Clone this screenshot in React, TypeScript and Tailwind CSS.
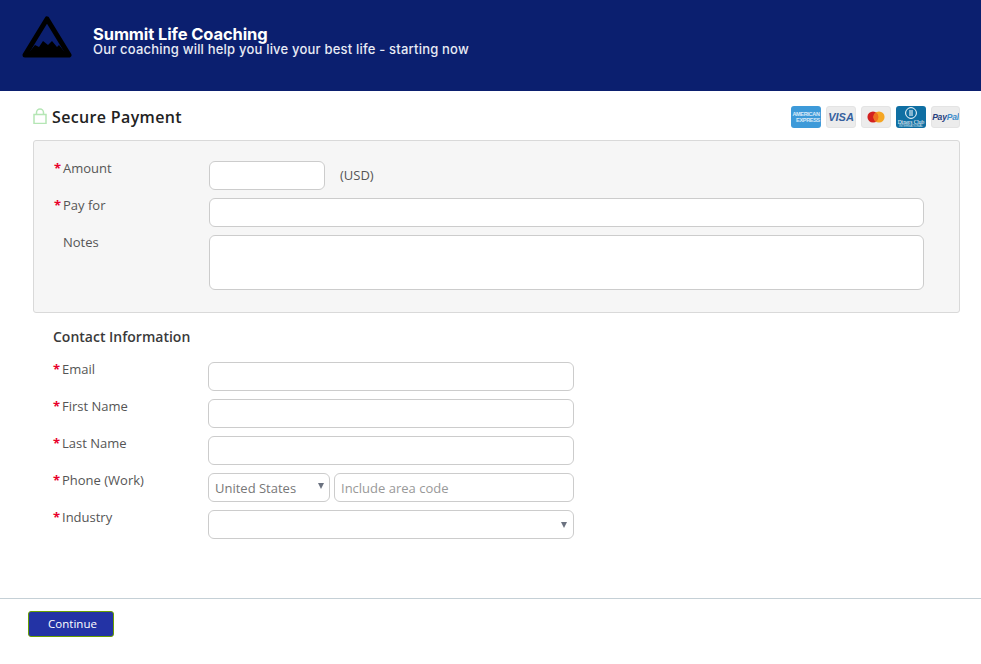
function Req() {
  return <span className="w-[9px] shrink-0 text-[#e8002a] text-[13px] leading-[19px] font-bold">*</span>;
}

function Label({ text, required = true, className = "" }: { text: string; required?: boolean; className?: string }) {
  return (
    <div className={"flex items-start text-[13px] leading-[19px] text-[#555] " + className}>
      {required ? <Req /> : <span className="w-[9px] shrink-0" />}
      <span>{text}</span>
    </div>
  );
}

function Field({ className = "" }: { className?: string }) {
  return <div className={"h-[29px] bg-white border border-[#ccc] rounded-[6px] " + className} />;
}

function Caret() {
  return <span className="w-0 h-0 border-l-[3.5px] border-r-[3.5px] border-t-[6px] border-l-transparent border-r-transparent border-t-[#6b7280]" />;
}

function CardBox({ children, className = "bg-[#ececec]" }: { children: React.ReactNode; className?: string }) {
  return <div className={"h-[22px] rounded-[3px] flex flex-col items-center justify-center overflow-hidden " + className}>{children}</div>;
}

function Cards() {
  return (
    <div className="flex gap-[5px]">
      <CardBox className="w-[30px] bg-[#3d9ad9]">
        <span className="text-[5.5px] leading-[6px] text-white/80 font-bold tracking-[-0.3px] font-['Liberation_Sans',sans-serif]">AMERICAN</span>
        <span className="text-[5.5px] leading-[6px] text-white/80 font-bold tracking-[-0.3px] pl-1 font-['Liberation_Sans',sans-serif]">EXPRESS</span>
      </CardBox>
      <CardBox className="w-[30px] bg-[#ececec] border border-[#e4e4e4]">
        <span className="text-[11px] italic font-bold text-[#35609e] font-['Liberation_Sans',sans-serif] leading-[11px]">VISA</span>
      </CardBox>
      <CardBox className="w-[30px] bg-[#ececec] border border-[#e4e4e4]">
        <svg width="20" height="12" viewBox="0 0 22 14">
          <circle cx="7.5" cy="7" r="6.5" fill="#d3201f" />
          <circle cx="14.5" cy="7" r="6.5" fill="#f5a623" />
          <path d="M11 1.6a6.5 6.5 0 0 1 0 10.8a6.5 6.5 0 0 1 0-10.8z" fill="#ee6f1f" />
        </svg>
      </CardBox>
      <CardBox className="w-[30px] bg-[#0f6fa3]">
        <svg width="12" height="12" viewBox="0 0 12 12">
          <circle cx="6" cy="6" r="5.4" fill="none" stroke="#fff" strokeWidth="1" />
          <path d="M5 3v6M7 3v6" stroke="#fff" strokeWidth="1" />
        </svg>
        <span className="text-[5.5px] leading-[6px] text-white font-['Liberation_Serif',serif] whitespace-nowrap">Diners Club</span>
        <span className="text-[3px] leading-[3px] text-white/80 font-['Liberation_Sans',sans-serif] whitespace-nowrap">INTERNATIONAL</span>
      </CardBox>
      <CardBox className="w-[29px] bg-[#ececec] border border-[#e4e4e4]">
        <span className="text-[8.5px] italic font-bold tracking-[-0.2px] font-['Liberation_Sans',sans-serif]">
          <span className="text-[#27407e]">Pay</span><span className="text-[#3d8ccb]">Pal</span>
        </span>
      </CardBox>
    </div>
  );
}

function ContactRow({ label, children }: { label: string; children: React.ReactNode }) {
  return (
    <div className="flex">
      <Label text={label} className="w-[155px] -mt-[2px]" />
      {children}
    </div>
  );
}

export default function App() {
  return (
    <div className="w-[981px] h-[664px] bg-white flex flex-col overflow-hidden font-['Open_Sans',sans-serif]">
      <header className="h-[91px] bg-[#0b1f6f] flex items-start pl-[22px] pt-[16px] shrink-0">
        <svg width="50" height="42" viewBox="0 0 50 42" className="shrink-0">
          <path d="M25 3 L47 39 L3 39 Z" fill="none" stroke="#000" strokeWidth="5" strokeLinejoin="round" />
          <path d="M4 40 L13 29 L17 31 L21 25 L26 29 L30 25 L35 31 L37 29 L46 40 Z" fill="#000" />
        </svg>
        <div className="ml-[21px] pt-[10px] font-['Inter',sans-serif] text-white whitespace-nowrap">
          <div className="text-[16.5px] leading-[16px] font-bold tracking-[-0.1px]">Summit Life Coaching</div>
          <div className="text-[13px] leading-[14px] font-medium text-[#e8ebf5] tracking-[0.2px]">Our coaching will help you live your best life - starting now</div>
        </div>
      </header>

      <div className="h-[49px] shrink-0 pl-[33px] pr-[21px] pt-[15px] flex items-start justify-between">
        <div className="flex items-center h-[22px]">
          <svg width="14" height="16" viewBox="0 0 14 16" className="-mt-[3px]">
            <rect x="1" y="6.5" width="12" height="9" fill="none" stroke="#b5e6b5" strokeWidth="1.5" />
            <path d="M3.5 6.5V4.5a3.5 3.5 0 0 1 7 0v2" fill="none" stroke="#b5e6b5" strokeWidth="1.5" />
          </svg>
          <span className="ml-[5px] text-[16px] font-semibold text-[#222] tracking-[0.35px]">Secure Payment</span>
        </div>
        <Cards />
      </div>

      <section className="mr-[21px] ml-[33px] h-[173px] shrink-0 bg-[#f6f6f6] border border-[#d9d9d9] rounded-[3px] pt-[20px] pl-[20px] pr-[35px] flex flex-col gap-[8px]">
        <div className="flex">
          <Label text="Amount" className="w-[155px] -mt-[2px]" />
          <Field className="w-[116px]" />
          <span className="ml-[15px] text-[13px] leading-[29px] text-[#555]">(USD)</span>
        </div>
        <div className="flex">
          <Label text="Pay for" className="w-[155px] -mt-[2px]" />
          <Field className="flex-1" />
        </div>
        <div className="flex">
          <Label text="Notes" required={false} className="w-[155px] -mt-[2px]" />
          <Field className="flex-1 !h-[55px]" />
        </div>
      </section>

      <section className="pl-[53px] shrink-0">
        <h2 className="mt-[14px] text-[14px] leading-[20px] font-semibold text-[#3a3a3a]">Contact Information</h2>
        <div className="mt-[15px] flex flex-col gap-[8px]">
          <ContactRow label="Email"><Field className="w-[366px]" /></ContactRow>
          <ContactRow label="First Name"><Field className="w-[366px]" /></ContactRow>
          <ContactRow label="Last Name"><Field className="w-[366px]" /></ContactRow>
          <ContactRow label="Phone (Work)">
            <div className="flex gap-[4px]">
              <div className="w-[122px] h-[29px] bg-white border border-[#ccc] rounded-[6px] flex items-center justify-between pl-[6px] pr-[5px] pt-[2px] text-[13px] text-[#777]">
                <span>United States</span>
                <span className="-mt-[6px] flex"><Caret /></span>
              </div>
              <div className="w-[240px] h-[29px] bg-white border border-[#ccc] rounded-[6px] flex items-center pl-[6px] pt-[2px] text-[13px] text-[#999]">
                Include area code
              </div>
            </div>
          </ContactRow>
          <ContactRow label="Industry">
            <div className="w-[366px] h-[29px] bg-white border border-[#ccc] rounded-[6px] flex items-center justify-end pr-[6px]">
              <Caret />
            </div>
          </ContactRow>
        </div>
      </section>

      <footer className="mt-[59px] border-t border-[#c5d0d6] pt-[12px] pl-[28px] shrink-0">
        <button className="w-[86px] h-[26px] pl-[3px] block bg-[#2333a5] border border-[#6aa000] rounded-[3px] text-white text-[11.5px] font-normal leading-none">Continue</button>
      </footer>
    </div>
  );
}
